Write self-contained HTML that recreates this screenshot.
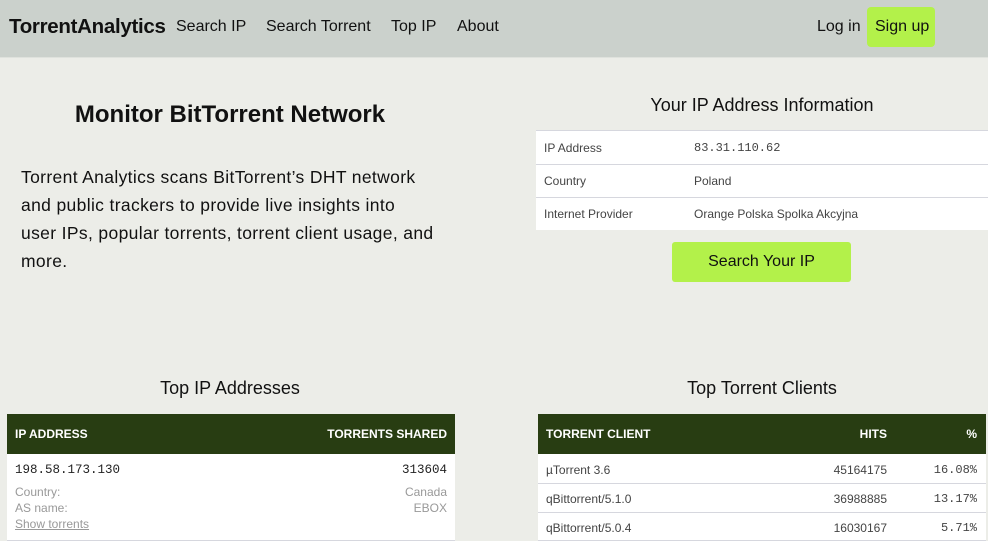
<!DOCTYPE html>
<html><head><meta charset="utf-8"><style>
*{margin:0;padding:0;box-sizing:border-box}
body{width:988px;height:541px;overflow:hidden;background:#ecede8;font-family:"Liberation Sans",sans-serif;color:#111;position:relative}
.a{position:absolute;white-space:nowrap}
.hdr{position:absolute;left:0;top:0;width:988px;height:58px;background:#cbd1cc;border-bottom:1px solid #dfe2dd}
.nav{font-size:16px;top:18px}
.mono{font-family:"Liberation Mono",monospace}
.row{position:absolute;background:#fff;border-bottom:1px solid #d6d7de}
.th{position:absolute;background:#283d12;color:#fff;font-size:12px;font-weight:bold}
.g{color:#444;font-size:12px}
.s{color:#999;font-size:12px}
</style></head><body>
<div class="hdr"></div>
<div class="a" style="left:9px;top:15px;font-size:20.5px;font-weight:bold;letter-spacing:-0.3px">TorrentAnalytics</div>
<div class="a nav" style="left:176px">Search IP</div>
<div class="a nav" style="left:266px">Search Torrent</div>
<div class="a nav" style="left:391px">Top IP</div>
<div class="a nav" style="left:457px">About</div>
<div class="a nav" style="left:817px">Log in</div>
<div class="a" style="left:867px;top:7px;width:68px;height:40px;background:#b3f14a;border-radius:4px"></div>
<div class="a nav" style="left:875px">Sign up</div>

<div class="a" style="left:0;width:460px;top:101px;text-align:center;font-size:24px;font-weight:bold">Monitor BitTorrent Network</div>
<div class="a" style="left:21px;top:163px;font-size:17.5px;line-height:28px;letter-spacing:0.35px">Torrent Analytics scans BitTorrent’s DHT network<br>and public trackers to provide live insights into<br>user IPs, popular torrents, torrent client usage, and<br>more.</div>

<div class="a" style="left:536px;width:452px;top:95px;text-align:center;font-size:18px">Your IP Address Information</div>
<div class="a" style="left:536px;top:130px;width:452px;height:1px;background:#d6d7de"></div>
<div class="row" style="left:536px;top:131px;width:452px;height:34px"></div>
<div class="row" style="left:536px;top:165px;width:452px;height:33px"></div>
<div class="row" style="left:536px;top:198px;width:452px;height:32px;border:0"></div>
<div class="a g" style="left:544px;top:141px">IP Address</div>
<div class="a g mono" style="left:694px;top:141px">83.31.110.62</div>
<div class="a g" style="left:544px;top:174px">Country</div>
<div class="a g" style="left:694px;top:174px">Poland</div>
<div class="a g" style="left:544px;top:207px">Internet Provider</div>
<div class="a g" style="left:694px;top:207px">Orange Polska Spolka Akcyjna</div>
<div class="a" style="left:672px;top:242px;width:179px;height:40px;background:#b3f14a;border-radius:3px;text-align:center;line-height:40px;font-size:16px">Search Your IP</div>

<div class="a" style="left:0;width:460px;top:378px;text-align:center;font-size:18px">Top IP Addresses</div>
<div class="th" style="left:7px;top:414px;width:448px;height:40px"></div>
<div class="a th" style="left:15px;top:427px;background:none">IP ADDRESS</div>
<div class="a th" style="left:200px;width:247px;text-align:right;top:427px;background:none">TORRENTS SHARED</div>
<div class="row" style="left:7px;top:454px;width:448px;height:87px"></div>
<div class="a mono" style="left:15px;top:463px;font-size:12.5px;color:#222">198.58.173.130</div>
<div class="a mono" style="left:300px;width:147px;text-align:right;top:463px;font-size:12.5px;color:#222">313604</div>
<div class="a s" style="left:15px;top:485px">Country:</div>
<div class="a s" style="left:300px;width:147px;text-align:right;top:485px">Canada</div>
<div class="a s" style="left:15px;top:501px">AS name:</div>
<div class="a s" style="left:300px;width:147px;text-align:right;top:501px">EBOX</div>
<div class="a s" style="left:15px;top:517px;text-decoration:underline">Show torrents</div>

<div class="a" style="left:536px;width:452px;top:378px;text-align:center;font-size:18px">Top Torrent Clients</div>
<div class="th" style="left:538px;top:414px;width:448px;height:40px"></div>
<div class="a th" style="left:546px;top:427px;background:none">TORRENT CLIENT</div>
<div class="a th" style="left:800px;width:87px;text-align:right;top:427px;background:none">HITS</div>
<div class="a th" style="left:900px;width:77px;text-align:right;top:427px;background:none">%</div>
<div class="row" style="left:538px;top:454px;width:448px;height:30px"></div>
<div class="row" style="left:538px;top:484px;width:448px;height:29px"></div>
<div class="row" style="left:538px;top:513px;width:448px;height:28px"></div>
<div class="a g" style="left:546px;top:463px">µTorrent 3.6</div>
<div class="a g" style="left:780px;width:107px;text-align:right;top:463px">45164175</div>
<div class="a g mono" style="left:890px;width:87px;text-align:right;top:463px">16.08%</div>
<div class="a g" style="left:546px;top:492px">qBittorrent/5.1.0</div>
<div class="a g" style="left:780px;width:107px;text-align:right;top:492px">36988885</div>
<div class="a g mono" style="left:890px;width:87px;text-align:right;top:492px">13.17%</div>
<div class="a g" style="left:546px;top:521px">qBittorrent/5.0.4</div>
<div class="a g" style="left:780px;width:107px;text-align:right;top:521px">16030167</div>
<div class="a g mono" style="left:890px;width:87px;text-align:right;top:521px">5.71%</div>
</body></html>
